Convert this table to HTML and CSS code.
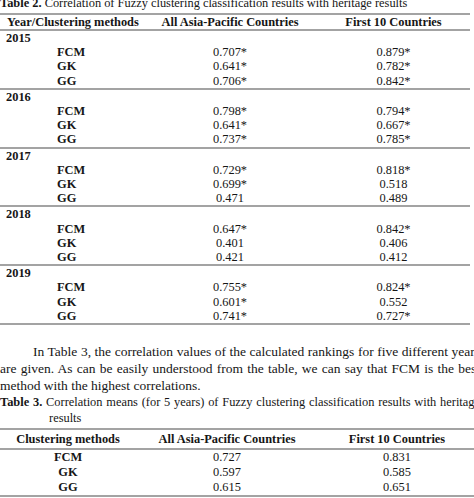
FILE: index.html
```html
<!DOCTYPE html>
<html>
<head>
<meta charset="utf-8">
<link rel="stylesheet" href="styles.css">
</head>
<body>
<div class="page">
  <p class="caption cap2"><b>Table 2.</b> Correlation of Fuzzy clustering classification results with heritage results</p>
  <table class="tbl t2">
    <colgroup><col class="w2a"><col class="w2b"><col class="w2c"></colgroup>
    <thead>
      <tr><th class="lab">Year/Clustering methods</th><th>All Asia-Pacific Countries</th><th>First 10 Countries</th></tr>
    </thead>
    <tbody>
      <tr><td class="yr">2015</td><td></td><td></td></tr>
      <tr><td class="m">FCM</td><td>0.707*</td><td>0.879*</td></tr>
      <tr><td class="m">GK</td><td>0.641*</td><td>0.782*</td></tr>
      <tr class="last"><td class="m">GG</td><td>0.706*</td><td>0.842*</td></tr>
    </tbody>
    <tbody>
      <tr><td class="yr">2016</td><td></td><td></td></tr>
      <tr><td class="m">FCM</td><td>0.798*</td><td>0.794*</td></tr>
      <tr><td class="m">GK</td><td>0.641*</td><td>0.667*</td></tr>
      <tr class="last"><td class="m">GG</td><td>0.737*</td><td>0.785*</td></tr>
    </tbody>
    <tbody>
      <tr><td class="yr">2017</td><td></td><td></td></tr>
      <tr><td class="m">FCM</td><td>0.729*</td><td>0.818*</td></tr>
      <tr><td class="m">GK</td><td>0.699*</td><td>0.518</td></tr>
      <tr class="last"><td class="m">GG</td><td>0.471</td><td>0.489</td></tr>
    </tbody>
    <tbody>
      <tr><td class="yr">2018</td><td></td><td></td></tr>
      <tr><td class="m">FCM</td><td>0.647*</td><td>0.842*</td></tr>
      <tr><td class="m">GK</td><td>0.401</td><td>0.406</td></tr>
      <tr class="last"><td class="m">GG</td><td>0.421</td><td>0.412</td></tr>
    </tbody>
    <tbody>
      <tr><td class="yr">2019</td><td></td><td></td></tr>
      <tr><td class="m">FCM</td><td>0.755*</td><td>0.824*</td></tr>
      <tr><td class="m">GK</td><td>0.601*</td><td>0.552</td></tr>
      <tr class="last"><td class="m">GG</td><td>0.741*</td><td>0.727*</td></tr>
    </tbody>
  </table>
  <p class="para">In Table 3, the correlation values of the calculated rankings for five different years are given. As can be easily understood from the table, we can say that FCM is the best method with the highest correlations.</p>
  <p class="caption cap3"><b>Table 3.</b> Correlation means (for 5 years) of Fuzzy clustering classification results with heritage results</p>
  <table class="tbl t3">
    <colgroup><col class="w3a"><col class="w3b"><col class="w3c"></colgroup>
    <thead>
      <tr><th>Clustering methods</th><th>All Asia-Pacific Countries</th><th>First 10 Countries</th></tr>
    </thead>
    <tbody>
      <tr><td class="mm">FCM</td><td>0.727</td><td>0.831</td></tr>
      <tr><td class="mm">GK</td><td>0.597</td><td>0.585</td></tr>
      <tr class="last"><td class="mm">GG</td><td>0.615</td><td>0.651</td></tr>
    </tbody>
  </table>
</div>
</body>
</html>
```

FILE: styles.css
```css
html, body {
  margin: 0;
  padding: 0;
  background: #ffffff;
}
.page {
  width: 474px;
  height: 498px;
  overflow: hidden;
  font-family: "Liberation Serif", "Times New Roman", serif;
  color: #161616;
  font-size: 12.4px;
}
.caption {
  margin: 0;
  font-size: 12.4px;
  line-height: 16px;
}
.cap2 {
  white-space: nowrap;
  margin-top: -5px;
  margin-bottom: 2px;
}
.tbl {
  border-collapse: separate;
  border-spacing: 0;
  table-layout: fixed;
  font-size: 12.4px;
}
.tbl th, .tbl td {
  padding: 0;
  text-align: center;
  white-space: nowrap;
}
.tbl thead th {
  border-top: 2px solid #a3a3a3;
  border-bottom: 2px solid #a3a3a3;
  font-weight: bold;
}
.tbl tr.last td {
  border-bottom: 2px solid #a3a3a3;
}

/* Table 2 */
.t2 { width: 470px; }
.w2a { width: 143px; }
.w2b { width: 174px; }
.w2c { width: 153px; }
.t2 thead th { line-height: 14px; }
.t2 th.lab { text-align: left; padding-left: 7px; }
.t2 td { line-height: 14.2px; }
.t2 td.yr { text-align: left; padding-left: 6px; font-weight: bold; }
.t2 td.m { text-align: left; padding-left: 57px; font-weight: bold; }

/* Paragraph */
.para {
  margin: 17.5px 0 0 0;
  width: 480px;
  font-size: 13.5px;
  line-height: 17px;
  text-align: justify;
  text-indent: 33px;
}

/* Table 3 */
.cap3 {
  margin-top: 0.5px;
  width: 431px;
  padding-left: 49px;
  text-indent: -49px;
  text-align: justify;
}
.t3 { width: 476px; margin-top: 2px; }
.w3a { width: 136px; }
.w3b { width: 182px; }
.w3c { width: 158px; }
.t3 thead th { line-height: 18px; }
.t3 td { line-height: 15px; }
.t3 td.mm { font-weight: bold; }
```
